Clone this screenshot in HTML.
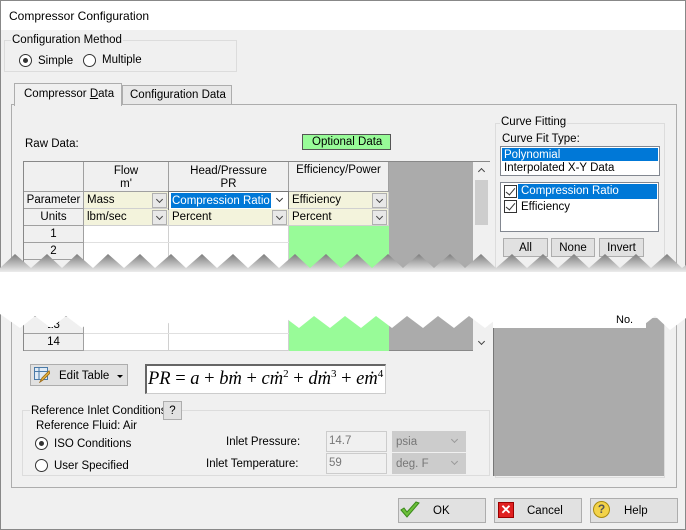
<!DOCTYPE html>
<html><head><meta charset="utf-8"><style>
*{box-sizing:border-box;margin:0;padding:0}
body{width:686px;height:530px;overflow:hidden;background:#f0f0f0;font-family:"Liberation Sans",sans-serif;font-size:11.5px;color:#000;position:relative}
.a{position:absolute}
.t{position:absolute;white-space:nowrap;padding-top:1px}
.gb{position:absolute;border:1px solid #dcdcdc}
.btn{position:absolute;background:#e1e1e1;border:1px solid #adadad;text-align:center}
.radio{position:absolute;width:13px;height:13px;border:1px solid #333;border-radius:50%;background:#fff}
.radio.on::after{content:"";position:absolute;left:3px;top:3px;width:5px;height:5px;border-radius:50%;background:#333}
.cell{position:absolute;border-right:1px solid #d0d0d0;border-bottom:1px solid #d0d0d0;background:#fff}
.hd{position:absolute;background:#f0f0f0;border-right:1px solid #a0a0a0;border-bottom:1px solid #a0a0a0;text-align:center}
.dd{position:absolute;width:15px;height:15px;border:1px solid #b0b0b0;background:#e8e8e8}
.dd::after{content:"";position:absolute;left:4px;top:3px;width:4px;height:4px;border-right:1px solid #444;border-bottom:1px solid #444;transform:rotate(45deg)}
</style></head><body>
<div class="a" style="left:0;top:0;width:686px;height:30px;background:#fff"></div>
<div class="t" style="left:9px;top:8px;font-size:12px">Compressor Configuration</div>
<div class="a" style="left:0;top:0;width:686px;height:530px;border:1px solid #888"></div>

<div class="gb" style="left:4px;top:40px;width:233px;height:32px"></div>
<div class="t" style="left:11px;top:34px;background:#f0f0f0;padding:0 1px">Configuration Method</div>
<div class="radio on" style="left:19px;top:54px"></div><div class="t" style="left:38px;top:54px">Simple</div>
<div class="radio" style="left:83px;top:54px"></div><div class="t" style="left:102px;top:53px">Multiple</div>

<div class="a" style="left:11px;top:104px;width:666px;height:384px;border:1px solid #adadad;background:#f0f0f0"></div>
<div class="a" style="left:122px;top:85px;width:110px;height:20px;border:1px solid #adadad;background:#e8e8e8"></div>
<div class="t" style="left:130px;top:88px">Configuration Data</div>
<div class="a" style="left:14px;top:83px;width:108px;height:23px;border:1px solid #adadad;border-bottom:none;background:#f0f0f0"></div>
<div class="t" style="left:24px;top:87px">Compressor <u>D</u>ata</div>

<div class="t" style="left:25px;top:137px">Raw Data:</div>
<div class="a" style="left:302px;top:134px;width:89px;height:16px;background:#98fb98;border:1px solid #555"></div>
<div class="t" style="left:312px;top:135px">Optional Data</div>

<div class="a" style="left:23px;top:161px;width:467px;height:190px;border:1px solid #888;background:#ababab"></div>
<div class="hd" style="left:24px;top:162px;width:60px;height:30px"></div>
<div class="hd" style="left:84px;top:162px;width:85px;height:30px;line-height:13px;padding-top:3px">Flow<br>m'</div>
<div class="hd" style="left:169px;top:162px;width:120px;height:30px;line-height:13px;padding-top:3px">Head/Pressure<br>PR</div>
<div class="hd" style="left:289px;top:162px;width:100px;height:30px;padding-top:2px">Efficiency/Power</div>
<div class="hd" style="left:24px;top:192px;width:60px;height:17px;line-height:17px">Parameter</div>
<div class="hd" style="left:24px;top:209px;width:60px;height:17px;line-height:17px">Units</div>
<div class="hd" style="left:24px;top:226px;width:60px;height:17px;line-height:17px">1</div>
<div class="hd" style="left:24px;top:243px;width:60px;height:17px;line-height:17px">2</div>
<div class="hd" style="left:24px;top:260px;width:60px;height:17px"></div>
<div class="hd" style="left:24px;top:300px;width:60px;height:17px"></div>
<div class="hd" style="left:24px;top:317px;width:60px;height:17px;line-height:17px">13</div>
<div class="hd" style="left:24px;top:334px;width:60px;height:17px;line-height:17px">14</div>
<div class="cell" style="left:84px;top:192px;width:85px;height:17px;background:#f3f3dc;padding-left:3px;line-height:16px">Mass</div>
<div class="dd" style="left:152px;top:193px"></div>
<div class="cell" style="left:84px;top:209px;width:85px;height:17px;background:#f3f3dc;padding-left:3px;line-height:16px">lbm/sec</div>
<div class="dd" style="left:152px;top:210px"></div>
<div class="a" style="left:168px;top:191px;width:121px;height:19px;background:#fff;border:1px solid #777"></div>
<div class="t" style="left:171px;top:193px;background:#0078d7;color:#fff;padding:1px 1px 0;line-height:14px">Compression Ratio</div>
<div class="a" style="left:277px;top:196px;width:5px;height:5px;border-right:1px solid #333;border-bottom:1px solid #333;transform:rotate(45deg)"></div>
<div class="cell" style="left:169px;top:209px;width:120px;height:17px;background:#f3f3dc;padding-left:3px;line-height:16px">Percent</div>
<div class="dd" style="left:272px;top:210px"></div>
<div class="cell" style="left:289px;top:192px;width:100px;height:17px;background:#f3f3dc;padding-left:3px;line-height:16px">Efficiency</div>
<div class="dd" style="left:372px;top:193px"></div>
<div class="cell" style="left:289px;top:209px;width:100px;height:17px;background:#f3f3dc;padding-left:3px;line-height:16px">Percent</div>
<div class="dd" style="left:372px;top:210px"></div>
<div class="cell" style="left:84px;top:226px;width:85px;height:125px"></div>
<div class="cell" style="left:169px;top:226px;width:120px;height:125px"></div>
<div class="a" style="left:84px;top:242px;width:205px;height:1px;background:#e0e0e0"></div>
<div class="a" style="left:84px;top:333px;width:205px;height:1px;background:#e0e0e0"></div>
<div class="a" style="left:289px;top:226px;width:100px;height:125px;background:#98fb98"></div>
<div class="a" style="left:473px;top:162px;width:17px;height:189px;background:#f0f0f0"></div>
<div class="a" style="left:475px;top:180px;width:13px;height:45px;background:#cdcdcd"></div>
<div class="a" style="left:479px;top:169px;width:5px;height:5px;border-left:1px solid #444;border-top:1px solid #444;transform:rotate(45deg)"></div>
<div class="a" style="left:479px;top:339px;width:5px;height:5px;border-right:1px solid #444;border-bottom:1px solid #444;transform:rotate(45deg)"></div>

<div class="gb" style="left:495px;top:123px;width:170px;height:355px"></div>
<div class="t" style="left:500px;top:115px;background:#f0f0f0;padding:1px 1px 0">Curve Fitting</div>
<div class="t" style="left:502px;top:132px">Curve Fit Type:</div>
<div class="a" style="left:500px;top:146px;width:160px;height:30px;background:#fff;border:1px solid #828790"></div>
<div class="a" style="left:502px;top:148px;width:156px;height:13px;background:#0078d7"></div>
<div class="t" style="left:504px;top:148px;color:#fff">Polynomial</div>
<div class="t" style="left:504px;top:161px">Interpolated X-Y Data</div>
<div class="a" style="left:500px;top:182px;width:159px;height:50px;background:#fff;border:1px solid #828790"></div>
<div class="a" style="left:518px;top:184px;width:139px;height:15px;background:#0078d7"></div>
<div class="t" style="left:521px;top:184px;color:#fff">Compression Ratio</div>
<div class="t" style="left:521px;top:200px">Efficiency</div>
<div class="a" style="left:504px;top:185px;width:13px;height:13px;border:1px solid #333;background:#fff"></div>
<div class="a" style="left:504px;top:200px;width:13px;height:13px;border:1px solid #333;background:#fff"></div>
<div class="a" style="left:508px;top:186px;width:5px;height:9px;border-right:1px solid #333;border-bottom:1px solid #333;transform:rotate(40deg)"></div>
<div class="a" style="left:508px;top:201px;width:5px;height:9px;border-right:1px solid #333;border-bottom:1px solid #333;transform:rotate(40deg)"></div>
<div class="btn" style="left:503px;top:238px;width:45px;height:19px;line-height:18px">All</div>
<div class="btn" style="left:551px;top:238px;width:44px;height:19px;line-height:18px">None</div>
<div class="btn" style="left:599px;top:238px;width:45px;height:19px;line-height:18px">Invert</div>
<div class="a" style="left:493px;top:318px;width:171px;height:158px;background:#ababab;border-left:1px solid #777"></div>
<div class="a" style="left:493px;top:310px;width:153px;height:18px;background:#fff"></div>

<svg class="a" style="left:0;top:0" width="686" height="530">
<defs><linearGradient id="g" gradientUnits="userSpaceOnUse" x1="0" y1="253" x2="0" y2="275"><stop offset="0" stop-color="#777"/><stop offset="0.5" stop-color="#bbb"/><stop offset="1" stop-color="#fff"/></linearGradient></defs>
<polygon fill="url(#g)" points="0,268 15,254 31,268 47,254 62,268 77,254 93,268 108,254 124,268 140,254 155,268 171,254 186,268 202,254 217,268 233,254 248,268 264,254 279,268 295,254 310,268 326,254 341,268 357,254 372,268 388,254 403,268 419,254 434,268 450,254 465,268 481,254 496,268 512,254 527,268 543,254 558,268 574,254 589,268 605,254 620,268 636,254 651,268 667,254 682,268 686,265 686,318 670,330 655,316 640,328 624,316 609,328 593,316 578,328 562,316 547,328 531,316 516,328 500,316 485,328 469,316 454,328 438,316 423,328 407,316 392,328 376,316 361,328 345,316 330,328 314,316 299,328 283,316 268,328 252,316 237,328 221,316 206,328 190,316 175,328 159,316 144,328 128,316 113,328 97,316 82,328 66,316 51,328 35,316 20,328 0,314"/>
<rect x="0" y="272" width="686" height="42" fill="#fff"/>
</svg>
<div class="t" style="left:616px;top:313px;font-size:11px">No.</div>

<div class="btn" style="left:30px;top:364px;width:98px;height:22px"></div>
<svg class="a" style="left:34px;top:367px" width="16" height="16"><rect x="0.5" y="0.5" width="13" height="12" fill="#dfeaf5" stroke="#4a7aa8"/><line x1="0" y1="4.5" x2="14" y2="4.5" stroke="#4a7aa8"/><line x1="5" y1="0" x2="5" y2="13" stroke="#4a7aa8"/><path d="M6 15 L8 11 L15 4 L16 6 L9 13 Z" fill="#f0c040" stroke="#a07020"/></svg>
<div class="t" style="left:59px;top:369px">Edit Table</div>
<div class="a" style="left:117px;top:375px;width:0;height:0;border-left:3px solid transparent;border-right:3px solid transparent;border-top:3px solid #000"></div>
<div class="a" style="left:145px;top:364px;width:241px;height:30px;background:#fff;border:1px solid #ccc;border-left:2px solid #666;border-top:2px solid #666"></div>
<div class="t" style="left:148px;top:367px;font-family:'Liberation Serif',serif;font-style:italic;font-size:18.5px">PR <span style="font-style:normal">=</span> a <span style="font-style:normal">+</span> bṁ <span style="font-style:normal">+</span> cṁ<sup style="font-size:11px;font-style:normal">2</sup> <span style="font-style:normal">+</span> dṁ<sup style="font-size:11px;font-style:normal">3</sup> <span style="font-style:normal">+</span> eṁ<sup style="font-size:11px;font-style:normal">4</sup></div>

<div class="gb" style="left:22px;top:410px;width:468px;height:66px"></div>
<div class="t" style="left:30px;top:404px;background:#f0f0f0;padding:1px 1px 0">Reference Inlet Conditions</div>
<div class="btn" style="left:163px;top:401px;width:19px;height:19px;line-height:18px">?</div>
<div class="t" style="left:36px;top:419px">Reference Fluid: Air</div>
<div class="radio on" style="left:35px;top:437px"></div><div class="t" style="left:54px;top:437px">ISO Conditions</div>
<div class="radio" style="left:35px;top:459px"></div><div class="t" style="left:54px;top:459px">User Specified</div>
<div class="t" style="left:226px;top:435px">Inlet Pressure:</div>
<div class="t" style="left:206px;top:457px">Inlet Temperature:</div>
<div class="a" style="left:326px;top:431px;width:61px;height:21px;border:1px solid #ccc;background:#f0f0f0"></div>
<div class="t" style="left:329px;top:434px;color:#777">14.7</div>
<div class="a" style="left:326px;top:453px;width:61px;height:21px;border:1px solid #ccc;background:#f0f0f0"></div>
<div class="t" style="left:329px;top:456px;color:#777">59</div>
<div class="a" style="left:392px;top:431px;width:74px;height:21px;background:#ccc"></div>
<div class="t" style="left:396px;top:435px;color:#777">psia</div>
<div class="a" style="left:392px;top:453px;width:74px;height:21px;background:#ccc"></div>
<div class="t" style="left:396px;top:457px;color:#777">deg. F</div>
<div class="a" style="left:452px;top:437px;width:5px;height:5px;border-right:1px solid #999;border-bottom:1px solid #999;transform:rotate(45deg)"></div>
<div class="a" style="left:452px;top:459px;width:5px;height:5px;border-right:1px solid #999;border-bottom:1px solid #999;transform:rotate(45deg)"></div>

<div class="btn" style="left:398px;top:498px;width:88px;height:25px"></div>
<svg class="a" style="left:400px;top:501px" width="20" height="18"><path d="M1 9 L7 16 L19 2 L16 1 L7 11 L4 7 Z" fill="#6cbf3a" stroke="#3a8a1a"/></svg>
<div class="t" style="left:433px;top:504px">OK</div>
<div class="btn" style="left:494px;top:498px;width:88px;height:25px"></div>
<div class="a" style="left:498px;top:502px;width:16px;height:16px;background:#e02020;border:1px solid #900;color:#fff;font-size:13px;font-weight:bold;line-height:14px;text-align:center">✕</div>
<div class="t" style="left:527px;top:504px">Cancel</div>
<div class="btn" style="left:590px;top:498px;width:88px;height:25px"></div>
<div class="a" style="left:593px;top:501px;width:17px;height:17px;border-radius:50%;background:#f3d34a;border:1px solid #a88a10;font-size:12px;font-weight:bold;text-align:center;line-height:15px;color:#555">?</div>
<div class="t" style="left:624px;top:504px">Help</div>
</body></html>
